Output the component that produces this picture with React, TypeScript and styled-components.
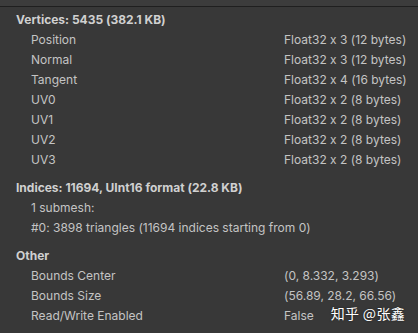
import React from "react";
import styled, { createGlobalStyle } from "styled-components";

const GlobalStyle = createGlobalStyle`
  html, body {
    margin: 0;
    padding: 0;
    background: #383838;
  }
  body {
    font-family: Inter, "Noto Sans", sans-serif;
    font-size: 12px;
    font-feature-settings: "calt" 0;
    color: #c4c4c4;
  }
`;

const Panel = styled.div`
  position: relative;
  width: 418px;
  height: 333px;
  background: #383838;
  overflow: hidden;
`;

const TopStrip = styled.div`
  height: 6px;
  background: #3c3c3c;
  border-bottom: 1px solid #1f1f1f;
`;

const Body = styled.div`
  padding: 3px 0 0 16px;
`;

const Section = styled.div<{ $gap: number }>`
  margin-top: ${(p) => p.$gap}px;
`;

const Title = styled.div`
  height: 20px;
  line-height: 20px;
  font-weight: 700;
  color: #d0d0d0;
`;

const Row = styled.div`
  display: grid;
  grid-template-columns: 253px 1fr;
  height: 20px;
  line-height: 20px;
  padding-left: 15px;
  white-space: nowrap;
`;

const Label = styled.span``;

const Value = styled.span``;

const Watermark = styled.div`
  position: absolute;
  right: 13px;
  bottom: 12px;
  line-height: 16px;
  font-family: "Noto Sans CJK SC", "Noto Sans", sans-serif;
  font-size: 14px;
  color: #ffffff;
  text-shadow: 0 0 2px rgba(0, 0, 0, 0.6);
  letter-spacing: 0.3px;
`;

const vertices = [
  ["Position", "Float32 x 3 (12 bytes)"],
  ["Normal", "Float32 x 3 (12 bytes)"],
  ["Tangent", "Float32 x 4 (16 bytes)"],
  ["UV0", "Float32 x 2 (8 bytes)"],
  ["UV1", "Float32 x 2 (8 bytes)"],
  ["UV2", "Float32 x 2 (8 bytes)"],
  ["UV3", "Float32 x 2 (8 bytes)"],
];

const other = [
  ["Bounds Center", "(0, 8.332, 3.293)"],
  ["Bounds Size", "(56.89, 28.2, 66.56)"],
  ["Read/Write Enabled", "False"],
];

export default function App() {
  return (
    <Panel>
      <GlobalStyle />
      <TopStrip />
      <Body>
        <Section $gap={0}>
          <Title>Vertices: 5435 (382.1 KB)</Title>
          {vertices.map(([label, value]) => (
            <Row key={label}>
              <Label>{label}</Label>
              <Value>{value}</Value>
            </Row>
          ))}
        </Section>

        <Section $gap={8}>
          <Title>Indices: 11694, UInt16 format (22.8 KB)</Title>
          <Row>
            <Label>1 submesh:</Label>
          </Row>
          <Row>
            <Label>#0: 3898 triangles (11694 indices starting from 0)</Label>
          </Row>
        </Section>

        <Section $gap={8}>
          <Title>Other</Title>
          {other.map(([label, value]) => (
            <Row key={label}>
              <Label>{label}</Label>
              <Value>{value}</Value>
            </Row>
          ))}
        </Section>
      </Body>
      <Watermark>知乎 @张鑫</Watermark>
    </Panel>
  );
}
